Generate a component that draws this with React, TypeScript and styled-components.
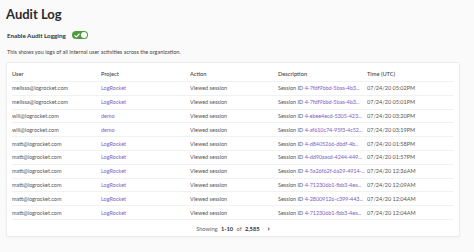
import React from 'react';
import styled, {createGlobalStyle} from "styled-components";

const GlobalStyle = createGlobalStyle`
  html, body {
    margin: 0;
    padding: 0;
    background: #fafafa;
  }

  body {
    font-family: "Lato", "Open Sans", sans-serif;
    color: #4a4a4a;
  }
`

type Entry = {
    user: string;
    project: string;
    session: string;
    time: string;
}

const entries: Entry[] = [
    {user: "melissa@logrocket.com", project: "LogRocket", session: "4-7fdf9bbd-5baa-4b3...", time: "07/24/20 05:02PM"},
    {user: "melissa@logrocket.com", project: "LogRocket", session: "4-7fdf9bbd-5baa-4b3...", time: "07/24/20 05:01PM"},
    {user: "will@logrocket.com", project: "demo", session: "4-ebee4ecd-5305-423...", time: "07/24/20 03:20PM"},
    {user: "will@logrocket.com", project: "demo", session: "4-af610c74-95f3-4c52...", time: "07/24/20 03:19PM"},
    {user: "matt@logrocket.com", project: "LogRocket", session: "4-d8405266-dbdf-4b...", time: "07/24/20 01:58PM"},
    {user: "matt@logrocket.com", project: "LogRocket", session: "4-dd90aacd-4244-449...", time: "07/24/20 01:57PM"},
    {user: "matt@logrocket.com", project: "LogRocket", session: "4-5a26f62f-6a29-4914-...", time: "07/24/20 12:36AM"},
    {user: "matt@logrocket.com", project: "LogRocket", session: "4-712306b1-fbb3-4ea...", time: "07/24/20 12:09AM"},
    {user: "matt@logrocket.com", project: "LogRocket", session: "4-28009126-c399-443...", time: "07/24/20 12:04AM"},
    {user: "matt@logrocket.com", project: "LogRocket", session: "4-712306b1-fbb3-4ea...", time: "07/24/20 12:04AM"},
];

export default function App() {
    return (
        <>
            <GlobalStyle/>
            <Page>
                <Title>Audit Log</Title>
                <SettingRow>
                    <SettingLabel>Enable Audit Logging</SettingLabel>
                    <Toggle>
                        <svg width="6" height="5" viewBox="0 0 6 5">
                            <path d="M0.8 2.6 L2.3 4 L5.2 1" stroke="#fff" strokeWidth="1.1" fill="none"
                                  strokeLinecap="round" strokeLinejoin="round"/>
                        </svg>
                        <Knob/>
                    </Toggle>
                </SettingRow>
                <Hint>This shows you logs of all internal user activities across the organization.</Hint>
                <Card>
                    <HeadRow>
                        <Cell>User</Cell>
                        <Cell>Project</Cell>
                        <Cell>Action</Cell>
                        <Cell>Description</Cell>
                        <Cell>Time (UTC)</Cell>
                    </HeadRow>
                    {entries.map((e, i) => (
                        <Row key={i}>
                            <Cell>{e.user}</Cell>
                            <Cell><Link>{e.project}</Link></Cell>
                            <Cell>Viewed session</Cell>
                            <Cell>Session ID <Link $tight>{e.session}</Link></Cell>
                            <Cell>{e.time}</Cell>
                        </Row>
                    ))}
                    <Footer>
                        Showing <b>1-10</b> of <b>2,585</b>
                        <Next>›</Next>
                    </Footer>
                </Card>
            </Page>
        </>
    );
}

const Page = styled.div`
  padding: 5px 14px 14px 6px;
  display: flex;
  flex-direction: column;
`

const Title = styled.h1`
  margin: 0;
  font-size: 13px;
  line-height: 18px;
  font-weight: 700;
  color: #2b2b2b;
`

const SettingRow = styled.div`
  display: flex;
  align-items: center;
  gap: 6px;
  margin-top: 6px;
  padding-left: 1px;
  height: 12px;
`

const SettingLabel = styled.span`
  font-size: 6.3px;
  font-weight: 700;
  color: #333;
`

const Toggle = styled.div`
  width: 16px;
  height: 8px;
  border-radius: 4px;
  background: #4e9a3e;
  display: flex;
  align-items: center;
  justify-content: space-between;
  padding: 0 1px 0 2px;
  box-sizing: border-box;
`

const Knob = styled.div`
  width: 6px;
  height: 6px;
  border-radius: 50%;
  background: #fff;
`

const Hint = styled.p`
  margin: 7px 0 0 1px;
  font-size: 5.5px;
  line-height: 8px;
  color: #444;
`

const Card = styled.div`
  margin-top: 6px;
  width: 454px;
  box-sizing: border-box;
  background: #fff;
  border: 1px solid #ececec;
  border-radius: 2px;
  padding: 2px 5px 0;
  box-shadow: 0 1px 2px rgba(0, 0, 0, 0.03);
`

const Row = styled.div`
  display: grid;
  grid-template-columns: 89px 89px 88px 89px 1fr;
  height: 13.8px;
  align-items: center;
  border-top: 1px solid #f1f1f1;
  box-sizing: border-box;
  font-size: 5.5px;
  color: #555;
`

const HeadRow = styled(Row)`
  border-top: none;
  height: 16px;
  padding-top: 1px;
  color: #444;
  font-weight: 500;
  font-size: 5.7px;
`

const Cell = styled.div`
  white-space: nowrap;
  overflow: hidden;
`

const Link = styled.span<{ $tight?: boolean }>`
  color: #7865c4;
  letter-spacing: ${p => p.$tight ? "-0.1px" : "0"};
`

const Footer = styled.div`
  display: flex;
  justify-content: center;
  align-items: center;
  gap: 2px;
  height: 16.5px;
  border-top: 1px solid #f1f1f1;
  font-size: 5.7px;
  color: #666;
  white-space: pre;

  b {
    color: #333;
    font-weight: 700;
  }
`

const Next = styled.span`
  margin-left: 6px;
  font-size: 8px;
  font-weight: 700;
  color: #333;
`
